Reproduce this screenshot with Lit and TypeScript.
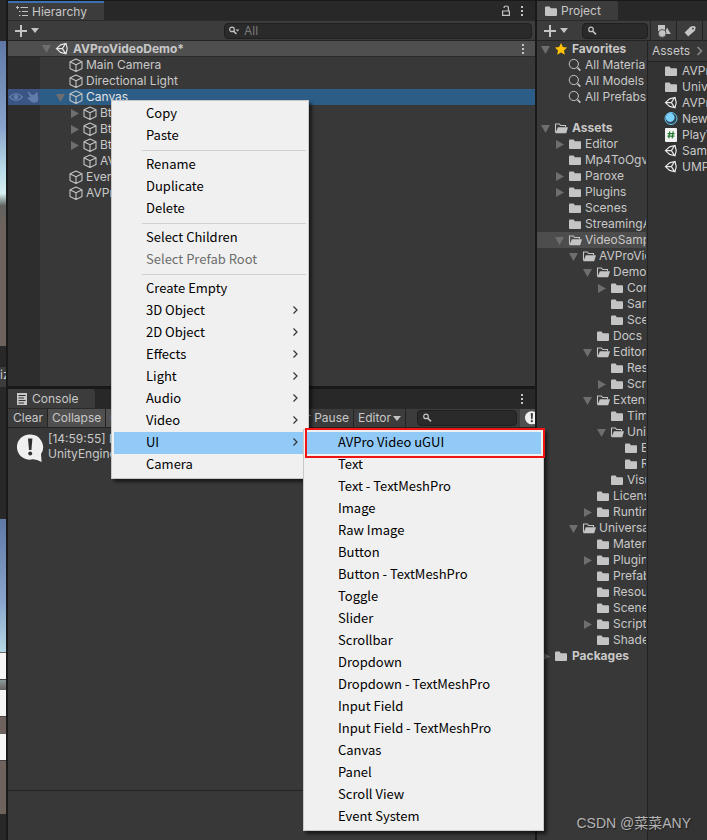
import { LitElement, html, css, svg, nothing } from "lit";
import { customElement, property } from "lit/decorators.js";
import { classMap } from "lit/directives/class-map.js";

const icons: Record<string, unknown> = {
  cube: svg`<path d="M7 1 L13 3.8 V10.6 L7 13.4 L1 10.6 V3.8 Z M1.4 4 L7 6.8 L12.6 4 M7 6.8 V13.2" fill="none" stroke="#c4c4c4" stroke-width="1.1" stroke-linejoin="round"/>`,
  folder: svg`<path d="M1 3.4 Q1 2.4 2 2.4 H5.6 L6.8 4.2 H12 Q13 4.2 13 5.2 V11 Q13 12 12 12 H2 Q1 12 1 11 Z" fill="#c4c4c4"/>`,
  open: svg`<path d="M1.5 11.6 V3 H5.4 L6.6 4.5 H11.5 V6" fill="none" stroke="#c4c4c4" stroke-width="1.1"/><path d="M3.9 6.2 H14 L12.2 12.2 H1.4 Z" fill="#c4c4c4"/>`,
  glass: svg`<circle cx="5.8" cy="6" r="4.6" fill="none" stroke="#c4c4c4" stroke-width="1"/><path d="M9.4 9.6 L12.4 12.6" stroke="#c4c4c4" stroke-width="1.5"/>`,
  star: svg`<path d="M7 1 L8.9 5 L13 5.5 L10 8.4 L10.8 12.8 L7 10.6 L3.2 12.8 L4 8.4 L1 5.5 L5.1 5 Z" fill="#ffc107"/>`,
  unity: svg`<path d="M1.4 6.6 L5.6 2.8 L11 1.4 L12.2 6.6 L11 11.8 L5.6 10.4 Z M1.4 6.6 H7.4 L10.4 1.8 M7.4 6.6 L10.4 11.4" fill="none" stroke="#e6e6e6" stroke-width="1.2"/>`,
  ball: svg`<circle cx="7" cy="6.5" r="6" fill="#2d4653" stroke="#6ccbf8" stroke-width="1"/><circle cx="6.2" cy="5.5" r="4.4" fill="#7dd3fc"/>`,
  script: svg`<rect x="1" y="0" width="12" height="14" rx="1" fill="#f2f2f2"/><path d="M5.8 3.4 L4.8 10.4 M9.2 3.4 L8.2 10.4 M3.6 5.6 H10.6 M3.4 8.2 H10.4" stroke="#1f7a2e" stroke-width="1.2"/>`,
  list: svg`<path d="M5.5 2.5 H13 M4 6.5 H5.5 M7 6.5 H13 M4 10.5 H5.5 M7 10.5 H13 M1 2.5 H4 M2.5 1 V4" stroke="#c4c4c4" stroke-width="1"/>`,
  doc: svg`<path d="M2 1 H12 V13 H2 Z" fill="#c8c8c8"/><path d="M3.5 3.5 H10.5 M3.5 6 H9 M3.5 8.5 H10.5 M3.5 11 H9" stroke="#333" stroke-width="1.1"/>`,
  plus: svg`<path d="M7 1 V13 M1 7 H13" stroke="#c4c4c4" stroke-width="2"/>`,
  search: svg`<circle cx="5" cy="5.4" r="2.3" fill="none" stroke="#c4c4c4" stroke-width="1.2"/><path d="M6.8 7.2 L10 10.4" stroke="#c4c4c4" stroke-width="1.6"/>`,
  searchMore: svg`<circle cx="4" cy="5.4" r="2.3" fill="none" stroke="#c4c4c4" stroke-width="1.2"/><path d="M5.8 7.2 L8.4 10" stroke="#c4c4c4" stroke-width="1.6"/><path d="M7.6 5.6 H11.4 L9.5 7.6 Z" fill="#c4c4c4"/>`,
  lock: svg`<path d="M1.6 7 H8.4 V11.4 H1.6 Z M7.4 6.6 V4 Q7.4 2 5.2 2 Q3 2 3 4" fill="none" stroke="#c4c4c4" stroke-width="1.2"/>`,
  dots: svg`<path d="M6 2 H8 V4 H6 Z M6 6 H8 V8 H6 Z M6 10 H8 V12 H6 Z" fill="#c4c4c4"/>`,
  shapes: svg`<rect x="1" y="1" width="7" height="6" fill="#c4c4c4"/><path d="M10 3.4 L13.8 10 H7.5 Z" fill="#c4c4c4"/><circle cx="5.2" cy="9.4" r="3.9" fill="#c4c4c4" stroke="#3c3c3c" stroke-width="0.8"/>`,
  tag: svg`<path d="M7.6 2.4 L11.6 2 L12.6 3.4 L12 6.6 L5.2 12.4 L1.6 8.4 Z" fill="#c4c4c4"/><circle cx="10" cy="4.6" r="0.9" fill="#3c3c3c"/>`,
  eye: svg`<path d="M0.6 7 Q7 0.2 13.4 7 Q7 13.8 0.6 7 Z" fill="none" stroke="#5f7cab" stroke-width="1.3"/><circle cx="7" cy="7" r="2.4" fill="#5f7cab"/>`,
  hand: svg`<path d="M1.4 2.2 L2.8 1.8 L6.2 5 L8.6 4.4 L10.4 2.4 L12 3 L11.6 5.4 L12.4 8 L11.6 11.6 L8 13 L4.8 11.4 L1.2 8 L2.2 7 L4.8 7.8 Z" fill="#5f7cab"/>`,
  bubble: svg`<path d="M13 0.5 A12.6 12.6 0 1 0 16 25.2 Q20 25.4 24.6 28 L24 20 A12.6 12.6 0 0 0 13 0.5 Z" fill="#f0f0f0"/><path d="M11 4.5 H15.4 L14.4 16 H12 Z" fill="#303030"/><circle cx="13.2" cy="19.6" r="2" fill="#303030"/>`,
  down: svg`<path d="M0 0 H8 L4 5 Z" fill="#c4c4c4"/>`,
  expanded: svg`<path d="M0 1 H9 L4.5 9 Z" fill="#6e6e6e"/>`,
  collapsed: svg`<path d="M1 0 L9 4.5 L1 9 Z" fill="#6e6e6e"/>`,
  chevron: svg`<path d="M3.5 1.5 L7 5 L3.5 8.5" fill="none" stroke="#333" stroke-width="1.2"/>`,
  crumb: svg`<path d="M1.5 1 L5.5 5 L1.5 9" fill="none" stroke="#8a8a8a" stroke-width="1.6"/>`,
};
const icon = (name: string, w = 14, h = w) =>
  html`<svg class="icon" width=${w} height=${h} viewBox="0 0 ${w} ${h}" aria-hidden="true">${icons[name]}</svg>`;

const base = css`
  * { box-sizing: border-box; }
  button, input, ul, li, p { font: inherit; color: inherit; margin: 0; padding: 0; border: 0; background: none; list-style: none; }
  .icon { flex: none; display: block; }
`;

interface Node { depth: number; icon: string; label: string; arrow?: "expanded" | "collapsed"; kind?: string }
const n = (depth: number, icon: string, label: string, arrow?: Node["arrow"], kind?: string): Node => ({ depth, icon, label, arrow, kind });

const sceneNodes = [
  n(0, "unity", "AVProVideoDemo*", "expanded", "scene"),
  n(1, "cube", "Main Camera"),
  n(1, "cube", "Directional Light"),
  n(1, "cube", "Canvas", "expanded", "selected"),
  n(2, "cube", "Btn", "collapsed"),
  n(2, "cube", "Btn", "collapsed"),
  n(2, "cube", "Btn", "collapsed"),
  n(2, "cube", "AVPro"),
  n(1, "cube", "Event"),
  n(1, "cube", "AVPro"),
];
const favorites = [
  n(0, "star", "Favorites", "expanded", "bold"),
  n(1, "glass", "All Materials"),
  n(1, "glass", "All Models"),
  n(1, "glass", "All Prefabs"),
];
const assets = [
  n(0, "open", "Assets", "expanded", "bold"),
  n(1, "folder", "Editor", "collapsed"),
  n(1, "folder", "Mp4ToOgv"),
  n(1, "folder", "Paroxe", "collapsed"),
  n(1, "folder", "Plugins", "collapsed"),
  n(1, "folder", "Scenes"),
  n(1, "folder", "StreamingAssets"),
  n(1, "open", "VideoSample", "expanded", "current"),
  n(2, "open", "AVProVideo", "expanded"),
  n(3, "open", "Demos", "expanded"),
  n(4, "folder", "Content", "collapsed"),
  n(4, "folder", "Samples"),
  n(4, "folder", "Scenes"),
  n(3, "folder", "Docs"),
  n(3, "open", "Editor", "expanded"),
  n(4, "folder", "Resources"),
  n(4, "folder", "Scripts", "collapsed"),
  n(3, "open", "Extensions", "expanded"),
  n(4, "folder", "Timeline"),
  n(4, "open", "UnityUI", "expanded"),
  n(5, "folder", "Editor"),
  n(5, "folder", "Resources"),
  n(4, "folder", "VisualEffect"),
  n(3, "folder", "Licenses"),
  n(3, "folder", "Runtime", "collapsed"),
  n(2, "open", "UniversalMedia", "expanded"),
  n(3, "folder", "Materials"),
  n(3, "folder", "Plugins", "collapsed"),
  n(3, "folder", "Prefabs"),
  n(3, "folder", "Resources"),
  n(3, "folder", "Scenes"),
  n(3, "folder", "Scripts", "collapsed"),
  n(3, "folder", "Shaders"),
  n(0, "folder", "Packages", "collapsed", "bold"),
];
const files = [["folder", "AVPro"], ["folder", "Universal"], ["unity", "AVPro"], ["ball", "New"], ["script", "PlayVideo"], ["unity", "Sample"], ["unity", "UMP"]];

@customElement("tree-view")
class TreeView extends LitElement {
  @property({ attribute: false }) nodes: Node[] = [];
  @property({ type: Boolean, reflect: true }) gutter = false;
  static styles = [base, css`
    :host { display: block; --start: 3px; }
    :host([gutter]) { --start: 1px; }
    .row { display: flex; align-items: center; height: 16px; white-space: nowrap; overflow: hidden; }
    .marks { flex: none; display: flex; align-items: center; gap: 3px; width: 32px; height: 16px; padding-left: 1px; }
    :host([gutter]) .marks { background: #2d2d2d; }
    :host(:not([gutter])) .marks { display: none; }
    .indent { flex: none; width: calc(var(--depth) * 14px + var(--start)); }
    .arrow { flex: none; width: 14px; height: 16px; display: flex; align-items: center; padding-left: 1px; }
    .label { flex: 1; overflow: hidden; padding-left: 3px; line-height: 16px; }
    .bold .label, .scene .label { font-weight: 700; padding-left: 4px; }
    .scene { background: #4f4f4f; border-bottom: 1px solid #2a2a2a; height: 16px; }
    :host([gutter]) .scene .marks { background: none; }
    .scene .tail { padding-right: 5px; }
    .selected { background: #2c5d87; color: #e4e4e4; }
    :host([gutter]) .selected .marks { background: #3a5584; }
    .current { background: #4d4d4d; }
  `];
  render() {
    return html`<ul>${this.nodes.map((d) => html`
      <li class="row ${d.kind ?? ""}">
        <span class="marks">${d.kind === "selected" ? html`${icon("eye")}${icon("hand")}` : nothing}</span>
        <span class="indent" style="--depth:${d.depth}"></span>
        <span class="arrow">${d.arrow ? icon(d.arrow, 9) : nothing}</span>
        ${icon(d.icon)}
        <span class="label">${d.label}</span>
        ${d.kind === "scene" ? html`<button class="tail" aria-label="Scene options">${icon("dots")}</button>` : nothing}
      </li>`)}</ul>`;
  }
}

interface Item { label?: string; more?: boolean; off?: boolean; sub?: Item[]; lit?: boolean }
const names = (s: string): Item[] => s.split("|").map((label) => ({ label }));
const uiItems: Item[] = [
  { label: "AVPro Video uGUI", lit: true },
  ...names("Text|Text - TextMeshPro|Image|Raw Image|Button|Button - TextMeshPro|Toggle|Slider|Scrollbar|Dropdown|Dropdown - TextMeshPro|Input Field|Input Field - TextMeshPro|Canvas|Panel|Scroll View|Event System"),
];
const contextItems: Item[] = [
  ...names("Copy|Paste"), {},
  ...names("Rename|Duplicate|Delete"), {},
  { label: "Select Children" }, { label: "Select Prefab Root", off: true }, {},
  { label: "Create Empty" },
  ...names("3D Object|2D Object|Effects|Light|Audio|Video").map((i) => ({ ...i, more: true })),
  { label: "UI", more: true, lit: true, sub: uiItems },
  { label: "Camera" },
];

@customElement("popup-menu")
class PopupMenu extends LitElement {
  @property({ attribute: false }) items: Item[] = [];
  static styles = [base, css`
    :host { display: block; padding: 2px; border: 1px solid #c8c8c8; background: #f0f0f0; color: #000; font: 13px/20px "Noto Sans CJK SC", "Noto Sans", sans-serif; box-shadow: 3px 3px 3px rgb(0 0 0 / 55%); }
    .entry { position: relative; }
    .item { display: flex; align-items: center; justify-content: space-between; width: 100%; height: 22px; padding: 0 6px 2px 32px; text-align: left; white-space: nowrap; }
    .item:disabled { color: #6d6d6d; }
    .lit { background: #91c9f7; }
    .rule { height: 7px; padding: 3px 0 3px 28px; }
    .rule::before { content: ""; display: block; height: 1px; background: #d0d0d0; }
    .sub { position: absolute; z-index: 1; top: -3px; left: calc(100% - 3px); width: 241px; }
    .mark { position: absolute; z-index: 2; top: -4px; left: calc(100% - 1px); width: 240px; height: 30px; border: 2px solid #f01414; pointer-events: none; }
  `];
  render() {
    return html`<ul role="menu">${this.items.map((i) => !i.label
      ? html`<li class="rule" role="separator"></li>`
      : html`<li class="entry" role="none">
          <button role="menuitem" class=${classMap({ item: true, lit: !!i.lit })} ?disabled=${!!i.off}>${i.label}${i.more ? icon("chevron", 10) : nothing}</button>
          ${i.sub ? html`<popup-menu class="sub" .items=${i.sub}></popup-menu><span class="mark"></span>` : nothing}
        </li>`)}</ul>`;
  }
}

@customElement("app-root")
class AppRoot extends LitElement {
  static styles = [base, css`
    :host { display: grid; grid-template-columns: 6px minmax(0, 527fr) minmax(0, 170fr); column-gap: 2px; min-height: 100vh; position: relative; overflow: hidden; background: #191919; color: #c8c8c8; font: 12px/16px Inter, sans-serif; }
    .views { display: grid; grid-template-rows: 41px 305px 21px 20px 132px minmax(0, 1fr) 26px; overflow: hidden; background: #282828; }
    .sky { grid-row: 2; background: linear-gradient(#5f78a6, #88a3cc 28%, #b9dbe8 42%, #d6f0f0 50%, #626262 54%, #6d625c 60%, #6d625c); }
    .gizmos { grid-row: 4; background: #3c3c3c; direction: rtl; white-space: nowrap; }
    .game { grid-row: 6; display: grid; grid-template-rows: 133px 28px 9px 28px 16px 28px 1fr; background: #6d625c; }
    .game .air { background: linear-gradient(#5f78a6, #88a3cc 60%, #b4d8e4); }
    .game .bar { background: #f5f5f5; border-top: 1px solid #666; border-bottom: 1px solid #444; }
    .game .haze { background: linear-gradient(#8a999c, #6d6764); }
    .middle { display: grid; grid-template-rows: 386px 1fr; row-gap: 2px; min-width: 0; }
    .panel { display: flex; flex-direction: column; min-width: 0; background: #383838; }
    .tabs { display: flex; align-items: stretch; height: 20px; background: #282828; border-top: 1px solid #191919; padding-right: 6px; }
    .tab { display: flex; align-items: center; gap: 3px; padding: 0 17px 0 7px; background: #3c3c3c; border-radius: 0 3px 0 0; }
    .focus { border-top: 2px solid #3a72b0; border-radius: 0; }
    .spacer { flex: 1; }
    .tools { display: flex; align-items: center; height: 21px; background: #3c3c3c; border-top: 1px solid #2a2a2a; border-bottom: 1px solid #232323; }
    .console .tools { height: 20px; padding-left: 1px; }
    .add { display: flex; align-items: center; gap: 3px; padding: 0 6px; }
    .search { display: flex; align-items: center; gap: 2px; height: 16px; background: #2a2a2a; border: 1px solid #1f1f1f; border-radius: 4px; padding-left: 3px; min-width: 0; }
    .search input { flex: 1; min-width: 0; width: 0; outline: 0; }
    .search input::placeholder { color: #7a7a7a; opacity: 1; }
    .wide { flex: 0 0 308px; margin: 0 3px 0 auto; }
    .tree { flex: 1; background: linear-gradient(90deg, #2d2d2d 32px, #383838 32px); }
    .ctool { display: flex; align-items: center; gap: 2px; height: 18px; padding: 0 4px; border-right: 1px solid #232323; white-space: nowrap; }
    .on { background: #505050; }
    .csearch { flex: 0 0 100px; margin: 0 3px 0 11px; }
    .count { display: flex; overflow: hidden; width: 15px; height: 18px; align-items: center; padding-left: 5px; background: #505050; }
    .log { flex: 1; display: flex; gap: 4px; padding: 3px 0 0 9px; line-height: 15px; white-space: nowrap; }
    .log .icon { margin-top: 3px; }
    .detail { height: 50px; border-top: 1px solid #232323; }
    .split { flex: 1; display: grid; grid-template-columns: 111px minmax(0, 1fr); }
    .folders { display: flex; flex-direction: column; gap: 15px; border-right: 1px solid #232323; min-width: 0; padding-right: 1px; }
    .files { min-width: 0; background: #333; overflow: hidden; }
    .crumbs { display: flex; align-items: center; gap: 6px; height: 21px; padding-left: 4px; background: #383838; border-bottom: 1px solid #232323; }
    .crumbs a { color: inherit; text-decoration: none; }
    .file { display: flex; align-items: center; gap: 4px; height: 16px; padding-left: 16px; white-space: nowrap; }
    .filelist { padding-top: 1px; }
    .psearch { flex: 0 0 66px; margin-left: 8px; }
    .ptool { display: flex; align-items: center; justify-content: center; flex: 0 0 26px; height: 20px; border-left: 1px solid #232323; }
    .push { margin-left: 2px; }
    .project .tools { overflow: hidden; }
    .context { position: absolute; left: 111px; top: 100px; width: 198px; z-index: 3; }
    .credit { position: absolute; right: 16px; bottom: 6px; z-index: 4; font: 14px/22px "Liberation Sans", "Noto Sans CJK SC", sans-serif; color: #b4b4b4; text-shadow: 1px 1px 1px #222; }
  `];
  render() {
    return html`
      <aside class="views">
        <div class="sky"></div>
        <div class="gizmos">iz</div>
        <div class="game"><i class="air"></i><i class="bar"></i><i class="haze"></i><i class="bar"></i><i></i><i class="bar"></i></div>
      </aside>
      <main class="middle">
        <section class="panel">
          <div class="tabs">
            <button class="tab focus">${icon("list")}Hierarchy</button><span class="spacer"></span>
            <button aria-label="Lock">${icon("lock")}</button><button aria-label="Panel options">${icon("dots")}</button>
          </div>
          <div class="tools">
            <button class="add" aria-label="Create">${icon("plus")}${icon("down", 8, 5)}</button>
            <label class="search wide">${icon("searchMore")}<input placeholder="All" aria-label="Search hierarchy"></label>
          </div>
          <div class="tree"><tree-view gutter .nodes=${sceneNodes}></tree-view></div>
        </section>
        <section class="panel console">
          <div class="tabs"><button class="tab">${icon("doc")}Console</button><span class="spacer"></span><button aria-label="Console options">${icon("dots")}</button></div>
          <div class="tools">
            <button class="ctool">Clear</button><button class="ctool on">Collapse</button><button class="ctool on">Clear on Play</button>
            <span class="spacer"></span>
            <button class="ctool">Error Pause</button><button class="ctool">Editor${icon("down", 8, 5)}</button>
            <label class="search csearch">${icon("search")}<input aria-label="Search console"></label>
            <button class="count" aria-label="Messages"><svg class="icon" width="14" height="15" viewBox="0 0 27 29">${icons.bubble}</svg></button>
          </div>
          <div class="log">${icon("bubble", 27, 29)}<p>[14:59:55] Begin<br>UnityEngine.Debug:Log</p></div>
          <div class="detail"></div>
        </section>
      </main>
      <section class="panel project">
        <div class="tabs"><button class="tab">${icon("folder")}Project</button></div>
        <div class="tools">
          <button class="add" aria-label="Create asset">${icon("plus")}${icon("down", 8, 5)}</button>
          <label class="search psearch">${icon("search")}<input aria-label="Search project"></label>
          <button class="ptool push" aria-label="Filter by type">${icon("shapes")}</button><button class="ptool" aria-label="Filter by label">${icon("tag")}</button><button class="ptool" aria-label="Save search"></button>
        </div>
        <div class="split">
          <div class="folders"><tree-view .nodes=${favorites}></tree-view><tree-view .nodes=${assets}></tree-view></div>
          <div class="files">
            <div class="crumbs"><a href="#assets">Assets</a>${icon("crumb", 9, 10)}</div>
            <ul class="filelist">${files.map(([i, label]) => html`<li class="file">${icon(i)}<span>${label}</span></li>`)}</ul>
          </div>
        </div>
      </section>
      <popup-menu class="context" .items=${contextItems}></popup-menu>
      <span class="credit">CSDN @菜菜ANY</span>
    `;
  }
}
